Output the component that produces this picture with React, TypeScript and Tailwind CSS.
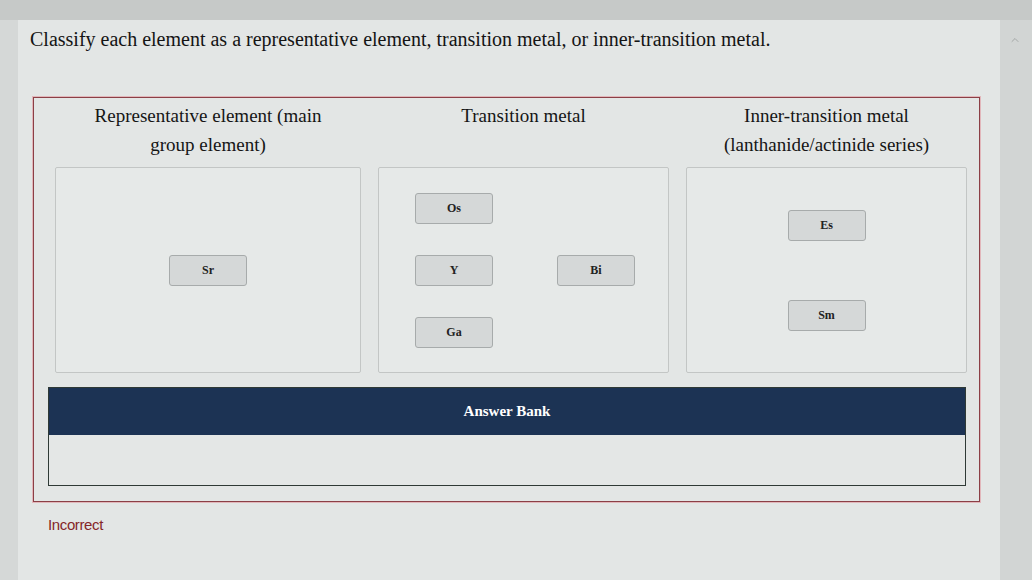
import { ChevronUp } from "lucide-react";

const serif = { fontFamily: '"Liberation Serif", "Times New Roman", serif' };

function Tile({ label }: { label: string }) {
  return (
    <div className="flex h-[31px] w-[78px] items-center justify-center rounded-[3px] border border-[#a7abab] bg-[#d5d8d8] text-[12px] font-bold text-[#222]">
      {label}
    </div>
  );
}

function Heading({ children }: { children: React.ReactNode }) {
  return (
    <div className="mx-auto max-w-[255px] text-center text-[19px] leading-[29px] text-[#151515]">
      {children}
    </div>
  );
}

export default function App() {
  return (
    <div
      className="flex h-[580px] w-[1032px] flex-col overflow-hidden bg-[#cdd0cf]"
      style={serif}
    >
      <div className="h-[20px] shrink-0 bg-[#c6c9c8]" />
      <div className="flex flex-1">
        <div className="w-[18px] shrink-0 bg-[#d5d8d7]" />
        {/* main panel */}
        <div className="flex-1 bg-[#e3e6e5] pl-[12px] pr-[20px] pt-[7px]">
          <p className="text-[20px] leading-[24px] text-[#141414]">
            Classify each element as a representative element, transition metal, or inner-transition metal.
          </p>

          <div className="ml-[3px] mt-[46px] w-[947px] border border-[#8b3f46] pb-[15px] pl-[21px] pr-[13px] pt-[3px] shadow-[0_0_0_1px_#e2b7bb]">
            <div className="grid grid-cols-[306px_291px_281px] gap-x-[17px]">
              <Heading>Representative element (main group element)</Heading>
              <Heading>Transition metal</Heading>
              <Heading>Inner-transition metal (lanthanide/actinide series)</Heading>

              {/* representative */}
              <div className="mt-[8px] flex h-[206px] items-center justify-center rounded-[2px] border border-[#c3c6c5] bg-[#e6e9e8]">
                <Tile label="Sr" />
              </div>

              {/* transition */}
              <div className="mt-[8px] flex h-[206px] items-center gap-[64px] rounded-[2px] border border-[#c3c6c5] bg-[#e6e9e8] pl-[36px]">
                <div className="flex flex-col gap-[31px]">
                  <Tile label="Os" />
                  <Tile label="Y" />
                  <Tile label="Ga" />
                </div>
                <Tile label="Bi" />
              </div>

              {/* inner-transition */}
              <div className="mt-[8px] flex h-[206px] flex-col items-center justify-center gap-[59px] rounded-[2px] border border-[#c3c6c5] bg-[#e6e9e8]">
                <Tile label="Es" />
                <Tile label="Sm" />
              </div>
            </div>

            {/* answer bank */}
            <div className="-ml-[7px] mt-[14px] border border-[#2f3a36]">
              <div className="flex h-[47px] items-center justify-center bg-[#1c3354] text-[15px] font-bold text-white">
                Answer Bank
              </div>
              <div className="h-[50px] bg-[#e4e7e6]" />
            </div>
          </div>

          <div
            className="ml-[18px] mt-[12px] text-[15px] tracking-tight text-[#852629]"
            style={{ fontFamily: '"Liberation Sans", Arial, sans-serif' }}
          >
            Incorrect
          </div>
        </div>
        {/* scrollbar strip */}
        <div className="w-[32px] shrink-0 bg-[#d2d5d4] pt-[14px]">
          <ChevronUp className="ml-[9px] h-[12px] w-[12px] text-[#a4a8a7]" strokeWidth={2} />
        </div>
      </div>
    </div>
  );
}
